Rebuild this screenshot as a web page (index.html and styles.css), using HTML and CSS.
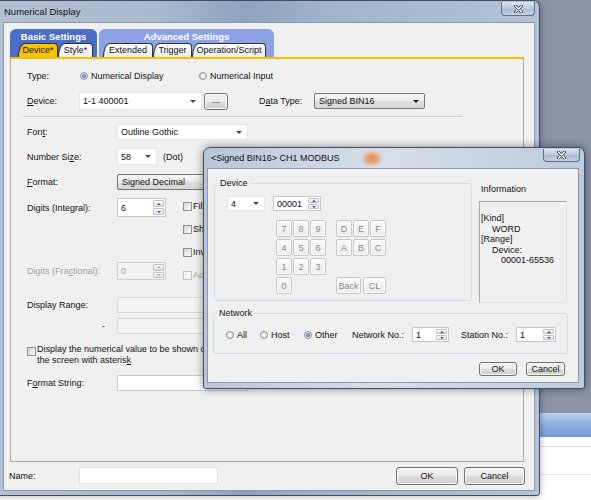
FILE: index.html
```html
<!DOCTYPE html>
<html>
<head>
<meta charset="utf-8">
<title>Numerical Display</title>
<link rel="stylesheet" href="styles.css">
</head>
<body>
<div class="desk">
  <div class="bgapp"><div class="bgbar"></div><div class="bgrow"></div><div class="bgrow2"></div></div>

  <div class="win main">
    <div class="tbar">
      <span class="ttext">Numerical Display</span>
      <span class="xbtn"><svg width="9" height="8" viewBox="0 0 9 8"><path d="M1.5 1 L7.5 7 M7.5 1 L1.5 7" stroke="#2d3a4e" stroke-width="3" stroke-linecap="round"/><path d="M1.5 1 L7.5 7 M7.5 1 L1.5 7" stroke="#fff" stroke-width="1.4" stroke-linecap="round"/></svg></span>
    </div>
    <div class="client mclient">
      <div class="tabs">
        <div class="tgroup basic">
          <div class="gtitle">Basic Settings</div>
          <div class="subtabs">
            <span class="tab t-device">Device*</span>
            <span class="tab t-style">Style*</span>
          </div>
        </div>
        <div class="tgroup adv">
          <div class="gtitle">Advanced Settings</div>
          <div class="subtabs">
            <span class="tab t-ext">Extended</span>
            <span class="tab t-trig">Trigger</span>
            <span class="tab t-op">Operation/Script</span>
          </div>
        </div>
      </div>

      <div class="panel">
        <div class="row r-type">
          <span class="lbl w53">Type:</span>
          <span class="ritem w119"><span class="radio on"></span>Numerical Display</span>
          <span class="ritem"><span class="radio"></span>Numerical Input</span>
        </div>
        <div class="row r-device">
          <span class="lbl w52"><u>D</u>evice:</span>
          <span class="combo flat c-dev">1-1 400001<span class="arrow"></span></span>
          <span class="btn b-dots">...</span>
          <span class="lbl l-dtype">D<u>a</u>ta Type:</span>
          <span class="combo raised c-dtype">Signed BIN16<span class="arrow"></span></span>
        </div>
        <div class="sep"></div>
        <div class="row r-font">
          <span class="lbl w90">Fon<u>t</u>:</span>
          <span class="combo flat c-font">Outline Gothic<span class="arrow"></span></span>
        </div>
        <div class="row r-size">
          <span class="lbl w90">Number Si<u>z</u>e:</span>
          <span class="combo flat c-size">58<span class="arrow"></span></span>
          <span class="dot">(Dot)</span>
        </div>
        <div class="row r-format">
          <span class="lbl w90"><u>F</u>ormat:</span>
          <span class="combo raised c-format">Signed Decimal<span class="arrow"></span></span>
        </div>
        <div class="digits">
          <div class="dcol">
            <div class="row r-int">
              <span class="lbl w90">Di<u>g</u>its (Integral):</span>
              <span class="spin spin-int"><span class="sv">6</span><span class="sbtns"><span class="su"></span><span class="sd"></span></span></span>
            </div>
            <div class="row r-frac dis">
              <span class="lbl w90">Digits (Fra<u>c</u>tional):</span>
              <span class="spin spin-int sdis"><span class="sv">0</span><span class="sbtns"><span class="su"></span><span class="sd"></span></span></span>
            </div>
          </div>
          <div class="ccol">
            <span class="cbitem"><span class="cb"></span>Fill 0</span>
            <span class="cbitem"><span class="cb"></span>Show +</span>
            <span class="cbitem"><span class="cb"></span>Invert</span>
            <span class="cbitem dis"><span class="cb cbdis"></span>Add</span>
          </div>
        </div>
        <div class="row r-range">
          <span class="lbl w90">Display Range:</span>
          <span class="box box-range"></span>
        </div>
        <div class="row r-range2">
          <span class="lbl w90 dash">-</span>
          <span class="box box-range"></span>
        </div>
        <div class="r-ast">
          <span class="cb cb-ast"></span>
          <span class="ast-text">Display the numerical value to be shown on<br>the screen with asteris<u>k</u></span>
        </div>
        <div class="row r-fmt">
          <span class="lbl w90">F<u>o</u>rmat String:</span>
          <span class="box box-fmt"></span>
        </div>
      </div>

      <div class="footer">
        <span class="lbl name-lbl">Name:</span>
        <span class="box name-box"></span>
        <span class="btn f-ok">OK</span>
        <span class="btn f-cancel">Cancel</span>
      </div>
    </div>
  </div>

  <div class="win popup">
    <div class="ptbar">
      <span class="pttext">&lt;Signed BIN16&gt; CH1 MODBUS</span>
      <span class="blob"></span>
      <span class="xbtn pxbtn"><svg width="9" height="8" viewBox="0 0 9 8"><path d="M1.5 1 L7.5 7 M7.5 1 L1.5 7" stroke="#2d3a4e" stroke-width="3" stroke-linecap="round"/><path d="M1.5 1 L7.5 7 M7.5 1 L1.5 7" stroke="#fff" stroke-width="1.4" stroke-linecap="round"/></svg></span>
    </div>
    <div class="client pclient">
      <div class="ptop">
        <div class="group dgroup">
          <span class="legend">Device</span>
          <div class="drow">
            <span class="combo flat c4">4<span class="arrow"></span></span>
            <span class="spin sp5"><span class="sv">00001</span><span class="sbtns"><span class="su"></span><span class="sd"></span></span></span>
          </div>
          <div class="keypad">
            <span class="key">7</span><span class="key">8</span><span class="key">9</span><span class="ksp"></span><span class="key">D</span><span class="key">E</span><span class="key">F</span>
            <span class="key">4</span><span class="key">5</span><span class="key">6</span><span class="ksp"></span><span class="key">A</span><span class="key">B</span><span class="key">C</span>
            <span class="key">1</span><span class="key">2</span><span class="key">3</span>
            <span class="key k0">0</span>
            <span class="kbc"><span class="key kback">Back</span><span class="key kcl">CL</span></span>
          </div>
        </div>
        <div class="info">
          <div class="ilbl">Information</div>
          <div class="ibox">
            <div>[Kind]</div>
            <div class="ind1">WORD</div>
            <div>[Range]</div>
            <div class="ind1">Device:</div>
            <div class="ind2">00001-65536</div>
          </div>
        </div>
      </div>
      <div class="group ngroup">
        <span class="legend">Network</span>
        <div class="nrow">
          <span class="ritem n-all"><span class="radio"></span>All</span>
          <span class="ritem n-host"><span class="radio"></span>Host</span>
          <span class="ritem n-other"><span class="radio on"></span>Other</span>
          <span class="lbl n-lbl1">Network No.:</span>
          <span class="spin n-sp1"><span class="sv">1</span><span class="sbtns"><span class="su"></span><span class="sd"></span></span></span>
          <span class="lbl n-lbl2">Station No.:</span>
          <span class="spin n-sp2"><span class="sv">1</span><span class="sbtns"><span class="su"></span><span class="sd"></span></span></span>
        </div>
      </div>
      <div class="pbtns">
        <span class="btn p-ok">OK</span>
        <span class="btn p-cancel">Cancel</span>
      </div>
    </div>
  </div>
</div>
</body>
</html>
```
FILE: styles.css
```css
* { box-sizing: border-box; }
html, body { margin: 0; padding: 0; }
body {
  width: 591px; height: 500px; overflow: hidden;
  background: #8b93a7;
  font-family: "Liberation Sans", Arial, sans-serif;
  font-size: 9px; color: #111;
}
u { text-decoration: underline; text-underline-offset: 1px; }
.desk { position: relative; width: 591px; height: 500px; }

/* background application behind the dialogs */
.bgapp { position: absolute; left: 0; top: 413px; width: 591px; height: 87px; background: #fff; }
.bgbar { height: 24px; background: linear-gradient(#bcd0ef, #8fb0e0 50%, #7099d6); }
.bgrow { height: 10px; border-bottom: 1px solid #dcdcdc; }
.bgrow2 { height: 28px; border-bottom: 1px solid #e6e6e6; }

/* windows */
.win {
  position: absolute; display: flex; flex-direction: column;
  border: 1px solid #3f4e63; border-radius: 7px 7px 3px 3px;
  box-shadow: 0 0 7px rgba(0,0,0,.35);
}
.main {
  left: -6px; top: 0; width: 546px; height: 496px;
  padding: 0 4px 4px 8px;
  background: linear-gradient(90deg, #b4c1d2 0, #a9b9ce 30%, #8ea3bf 46%, #a2b4cb 62%, #b5c4d6 100%);
}
.tbar {
  height: 21px; margin: 0 -4px 0 -8px; padding: 5px 0 0 9px;
  display: flex; align-items: flex-start;
}
.ttext { line-height: 12px; font-size: 9.5px; color: #111; }
.xbtn {
  margin-left: auto; margin-right: 4px; margin-top: -4px;
  width: 34px; height: 14px;
  display: flex; align-items: center; justify-content: center;
  border: 1px solid #60718a; border-top: none; border-radius: 0 0 4px 4px;
  background: linear-gradient(#dbe4ef, #bac8da 50%, #a9b9ce 51%, #c4d1e1);
}
.client { flex: 1; background: #f0f0f0; border: 1px solid #8797ad; display: flex; flex-direction: column; }
.mclient { padding: 6px 0 0 6px; }

/* tabs */
.tabs { display: flex; height: 28px; }
.tgroup { height: 28px; border-radius: 6px 6px 0 0; display: flex; flex-direction: column; }
.basic { width: 87px; background: #4b6ec8; }
.adv { width: 175px; margin-left: 2px; background: #8da2e4; }
.gtitle { height: 14px; line-height: 15px; text-align: center; color: #fff; font-weight: bold; font-size: 9.5px; }
.subtabs { height: 14px; display: flex; align-items: flex-end; }
.basic .subtabs { padding-left: 8px; }
.adv .subtabs { padding-left: 4px; }
.tab {
  height: 14px; border: 1px solid #333; border-bottom: none;
  border-radius: 7px 4px 0 0 / 14px 4px 0 0;
  background: linear-gradient(#ffffff, #ececec); text-align: center; line-height: 13px; font-size: 9px; color: #111;
}
.t-device { width: 40px; background: #f7c500; }
.t-style { width: 35px; }
.t-ext { width: 50px; }
.t-trig { width: 39px; }
.t-op { width: 74px; }

/* panel */
.panel {
  width: 514px; height: 405px;
  border: 1px solid #a8a8a8; border-top: 2px solid #f3c300;
  padding: 0 0 0 16px; display: flex; flex-direction: column;
}
.row { display: flex; align-items: center; }
.lbl { flex: none; white-space: nowrap; }
.w53 { width: 53px; }
.w52 { width: 52px; }
.w90 { width: 90px; }
.w119 { width: 119px; }
.ritem { display: flex; align-items: center; gap: 3px; white-space: nowrap; }
.radio {
  width: 8px; height: 8px; border-radius: 50%; border: 1px solid #8d8d8d; flex: none;
  background: radial-gradient(circle, #fff 0, #e8e8e8 55%, #cfcfcf 100%);
  display: inline-flex; align-items: center; justify-content: center;
}
.radio.on::after { content: ""; width: 4px; height: 4px; border-radius: 50%; background: radial-gradient(circle at 40% 40%, #8db4ee, #1b4fa3); }
.cb { width: 9px; height: 9px; border: 1px solid #8f8f8f; flex: none; background: linear-gradient(135deg, #d6d6d6, #fbfbfb); }
.cbdis { border-color: #c4c4c4; background: #f4f4f4; }

.combo {
  display: flex; align-items: center; justify-content: space-between;
  padding: 0 5px 0 3px; white-space: nowrap;
}
.flat { background: #fff; border: 1px solid #e3e6ea; }
.raised { border: 1px solid #767676; border-radius: 2px; background: linear-gradient(#f7f7f7, #ececec 50%, #dedede 51%, #d6d6d6); padding-left: 4px; }
.arrow { width: 0; height: 0; border-left: 3px solid transparent; border-right: 3px solid transparent; border-top: 3px solid #222; }
.flat .arrow { border-top-color: #3a4a66; }

.btn {
  display: flex; align-items: center; justify-content: center; flex: none;
  border: 1px solid #707070; border-radius: 3px;
  background: linear-gradient(#f3f3f3, #ebebeb 50%, #dddddd 51%, #cfcfcf);
  box-shadow: inset 0 0 0 1px #fbfbfb; color: #111;
}

.r-type { margin-top: 10px; height: 14px; }
.r-device { margin-top: 9px; height: 18px; }
.c-dev { width: 123px; height: 18px; }
.b-dots { width: 24px; height: 17px; margin-left: 2px; padding-bottom: 3px; }
.l-dtype { margin-left: 31px; width: 55px; }
.c-dtype { width: 111px; height: 16px; }
.sep { margin: 6px 0 0 -4px; width: 439px; border-top: 1px solid #cdcdcd; border-bottom: 1px solid #fff; }
.r-font { margin-top: 6px; height: 16px; }
.c-font { width: 131px; height: 16px; }
.r-size { margin-top: 8px; height: 17px; }
.c-size { width: 40px; height: 17px; }
.dot { margin-left: 6px; }
.r-format { margin-top: 8px; height: 17px; }
.c-format { width: 131px; height: 16px; }

.digits { display: flex; margin-top: 8px; }
.dcol { width: 156px; display: flex; flex-direction: column; }
.r-int { height: 19px; }
.r-frac { margin-top: 45px; height: 18px; }
.spin-int { width: 49px; height: 19px; }
.r-frac .spin-int { height: 18px; }
.dis { color: #a3a3a3; }
.ccol { display: flex; flex-direction: column; gap: 9px; padding-top: 1px; }
.cbitem { height: 14px; display: flex; align-items: center; gap: 1px; white-space: nowrap; }

.spin { display: flex; background: #fff; border: 1px solid #c5cad2; flex: none; }
.sv { flex: 1; padding-left: 3px; display: flex; align-items: center; }
.sbtns { width: 13px; display: flex; flex-direction: column; padding: 1px; gap: 1px; }
.su, .sd {
  flex: 1; border: 1px solid #c3c3c3; border-radius: 1px;
  background: linear-gradient(#f8f8f8, #e3e3e3);
  display: flex; align-items: center; justify-content: center;
}
.su::after { content: ""; border-left: 2px solid transparent; border-right: 2px solid transparent; border-bottom: 2px solid #3d5a8c; }
.sd::after { content: ""; border-left: 2px solid transparent; border-right: 2px solid transparent; border-top: 2px solid #3d5a8c; }
.sdis { background: #f2f2f2; border-color: #d0d0d0; }
.sdis .su::after { border-bottom-color: #b0b0b0; }
.sdis .sd::after { border-top-color: #b0b0b0; }

.box { flex: none; }
.r-range { margin-top: 15px; height: 16px; }
.r-range2 { margin-top: 5px; height: 16px; }
.box-range { width: 131px; height: 16px; background: #f3f3f3; border: 1px solid #d9d9d9; }
.dash { padding-left: 75px; }
.r-ast { margin-top: 10px; display: flex; align-items: flex-start; gap: 1px; }
.cb-ast { margin-top: 3px; }
.ast-text { line-height: 11px; white-space: nowrap; }
.r-fmt { margin-top: 9px; height: 16px; }
.box-fmt { width: 131px; height: 16px; background: #fff; border: 1px solid #cbcbcb; }

.footer { display: flex; align-items: center; height: 17px; margin-top: 5px; margin-left: -1px; padding-right: 9px; }
.name-lbl { width: 70px; }
.name-box { width: 139px; height: 17px; background: #fff; border: 1px solid #dde2e8; }
.f-ok { margin-left: auto; width: 62px; height: 18px; }
.f-cancel { margin-left: 6px; width: 61px; height: 18px; }

/* popup */
.popup {
  left: 203px; top: 147px; width: 382px; height: 242px;
  padding: 0 5px 5px 3px;
  background: linear-gradient(90deg, #b7c6d9, #d5dfea 45%, #cad6e4 70%, #bdcbdd);
  box-shadow: 0 0 9px rgba(0,0,0,.45);
}
.ptbar { height: 20px; margin: 0 -5px 0 -3px; padding: 4px 0 0 7px; display: flex; align-items: flex-start; }
.pttext { width: 151px; line-height: 12px; white-space: nowrap; }
.blob {
  width: 20px; height: 15px; margin-top: -1px;
  background: radial-gradient(ellipse, #df8a52 0, #e9a877 45%, rgba(235,180,140,0) 75%);
  filter: blur(1px);
}
.pxbtn { width: 37px; height: 13px; margin-top: -3px; }
.pclient { border-color: #8a9ab0; }
.ptop { display: flex; align-items: flex-start; }
.group { border: 1px solid #d3dde3; border-radius: 3px; }
.legend {
  display: block; width: fit-content; height: 11px; line-height: 11px;
  margin: -6px 0 0 3px; padding: 0 2px; background: #f0f0f0;
}
.dgroup { width: 258px; height: 118px; margin: 14px 0 0 6px; }
.drow { display: flex; align-items: center; height: 15px; margin: 7px 0 0 12px; }
.c4 { width: 38px; height: 15px; }
.sp5 { width: 48px; height: 15px; margin-left: 8px; }
.keypad {
  display: grid; grid-template-columns: 16px 16px 16px 8px 16px 16px 16px;
  grid-auto-rows: 17px; column-gap: 1px; row-gap: 2px; margin: 9px 0 0 61px;
}
.key {
  border: 1px solid #c6c6c6; border-radius: 2px;
  background: linear-gradient(#fafafa, #ececec);
  box-shadow: inset 0 0 0 1px #fff;
  color: #8a8a8a; display: flex; align-items: center; justify-content: center;
}
.k0 { grid-row: 4; grid-column: 1; }
.kbc { grid-row: 4; grid-column: 5 / 8; display: flex; gap: 2px; }
.kback { width: 25px; }
.kcl { width: 23px; }

.info { margin: 15px 0 0 7px; width: 88px; }
.ilbl { height: 11px; line-height: 11px; padding-left: 2px; }
.ibox {
  margin-top: 6px; height: 102px; padding: 11px 0 0 1px; line-height: 10.5px;
  border: 1px solid #a9a9a9; border-right-color: #e2e2e2; border-bottom-color: #e2e2e2;
}
.ind1 { padding-left: 11px; }
.ind2 { padding-left: 20px; }

.ngroup { width: 355px; height: 41px; margin: 10px 0 0 5px; }
.nrow { display: flex; align-items: center; height: 15px; margin: 8px 0 0 12px; }
.n-all { width: 34px; }
.n-host { width: 44px; }
.n-other { width: 48px; }
.n-lbl1 { width: 60px; }
.n-sp1 { width: 37px; height: 15px; }
.n-lbl2 { width: 55px; margin-left: 12px; }
.n-sp2 { width: 40px; height: 15px; }

.pbtns { display: flex; justify-content: flex-end; gap: 9px; margin-top: 8px; padding-right: 13px; }
.p-ok { width: 38px; height: 14px; }
.p-cancel { width: 39px; height: 14px; }
```
